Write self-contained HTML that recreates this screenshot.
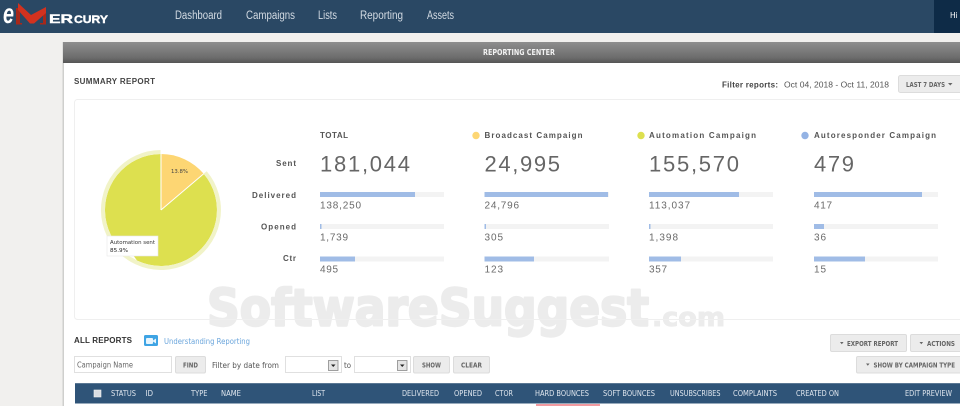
<!DOCTYPE html>
<html><head><meta charset="utf-8"><title>Reporting Center</title>
<style>
html,body{margin:0;padding:0;width:960px;height:406px;overflow:hidden;background:#f1f0ee}
svg{display:block}
text{font-family:"DejaVu Sans","Liberation Sans",sans-serif}
.l{font-family:"Liberation Sans",sans-serif}
.nav{font-family:"Liberation Sans",sans-serif;font-size:11.5px;fill:#d3dbe3}
.b{font-family:"Liberation Sans",sans-serif;font-weight:700;font-size:8px;fill:#555}
.big{font-family:"Liberation Sans",sans-serif;font-size:22px;fill:#666}
.n{font-family:"Liberation Sans",sans-serif;font-size:10px;fill:#6a6a6a}
.th{font-size:7.5px;fill:#dfe6ee}
.btn{font-size:7px;font-weight:700;fill:#666}
.t{fill:#f3f3f3}
.f{fill:#a0bce6}
.bt{fill:#ececec;stroke:#dcdcdc;stroke-width:1}
</style></head><body>
<svg width="960" height="406" viewBox="0 0 960 406" xmlns="http://www.w3.org/2000/svg">
<defs>
<linearGradient id="g" x1="0" y1="0" x2="0" y2="1"><stop offset="0" stop-color="#8e8e8e"/><stop offset=".75" stop-color="#6c6c6c"/><stop offset="1" stop-color="#555"/></linearGradient>
</defs>
<rect width="960" height="406" fill="#f1f0ee"/>
<!-- nav -->
<rect width="960" height="33" fill="#2a4864"/>
<rect x="934" width="26" height="33" fill="#0e2b47"/>
<text class="l" x="3" y="23" font-size="28" font-weight="700" font-style="italic" fill="#fff" textLength="11" lengthAdjust="spacingAndGlyphs">e</text>
<path d="M16 8h4v15h2v1.500h-6zM43 9l3-1v16.500h-6V23h3z" fill="#a8281a"/>
<path d="M18 3L31 15L46 7V13L34 23.500H30L18 10Z" fill="#d2321f"/>
<text class="l" x="49" y="23" font-size="12" font-weight="700" fill="#fff" stroke="#fff" stroke-width=".4" textLength="24" lengthAdjust="spacingAndGlyphs">ER</text>
<text class="l" x="74" y="23" font-size="11" font-weight="700" fill="#fff" stroke="#fff" stroke-width=".4" textLength="34" lengthAdjust="spacingAndGlyphs">CURY</text>
<text class="nav" x="175" y="19" textLength="47" lengthAdjust="spacingAndGlyphs">Dashboard</text>
<text class="nav" x="246" y="19" textLength="49" lengthAdjust="spacingAndGlyphs">Campaigns</text>
<text class="nav" x="318" y="19" textLength="19" lengthAdjust="spacingAndGlyphs">Lists</text>
<text class="nav" x="360" y="19" textLength="43" lengthAdjust="spacingAndGlyphs">Reporting</text>
<text class="nav" x="427" y="19" textLength="27" lengthAdjust="spacingAndGlyphs">Assets</text>
<text x="950" y="18" font-size="7.5" fill="#fff">Hi</text>
<!-- panel -->
<rect x="63" y="42" width="897" height="364" fill="#fff"/>
<rect x="62.5" y="42" width="1.5" height="364" fill="#cfcfcd"/>
<rect x="63" y="42" width="897" height="21" fill="url(#g)"/>
<text x="483" y="55" font-size="7.5" font-weight="700" fill="#f2f2f2" textLength="72" lengthAdjust="spacingAndGlyphs">REPORTING CENTER</text>
<text class="b" x="74" y="84" textLength="81" lengthAdjust="spacing" style="fill:#444">SUMMARY REPORT</text>
<text class="b" x="722" y="87.500" textLength="56" lengthAdjust="spacing" style="fill:#444">Filter reports:</text>
<text class="l" x="784" y="87.500" font-size="8.500" fill="#555" textLength="105" lengthAdjust="spacing">Oct 04, 2018 - Oct 11, 2018</text>
<rect class="bt" x="898.500" y="75.500" width="70" height="17" rx="2"/>
<text class="btn" x="906" y="87" textLength="39" lengthAdjust="spacingAndGlyphs">LAST 7 DAYS</text>
<path d="M948 83h4.500l-2.250 2.500z" fill="#666"/>
<!-- watermark -->
<text x="207" y="325.500" font-size="51" font-weight="700" fill="#ececec" stroke="#ececec" stroke-width="2.400" stroke-linejoin="round" textLength="442" lengthAdjust="spacingAndGlyphs">SoftwareSuggest</text>
<text x="652" y="326" font-size="26" font-weight="700" fill="#ececec" stroke="#ececec" stroke-width="1" textLength="73" lengthAdjust="spacingAndGlyphs">.com</text>
<!-- summary box -->
<rect x="74.500" y="99.500" width="900" height="220" rx="3" fill="none" stroke="#efefef"/>
<!-- pie -->
<path d="M161 210L203.700 173.800A56 56 0 1 1 161 154Z" fill="#dde04f"/>
<path d="M161 152A58 58 0 1 0 205.200 172.500" fill="none" stroke="#f1f3c8" stroke-width="4"/>
<path d="M161 210V154A56 56 0 0 1 203.700 173.800Z" fill="#fdd673"/>
<path d="M161 210L203.700 173.800M161 150V210" stroke="#fff" stroke-width="1" fill="none"/>
<text x="171" y="173" font-size="5.500" fill="#444" textLength="17" lengthAdjust="spacingAndGlyphs">13.8%</text>
<path d="M127 255L137 260.500L133 255Z" fill="#fff"/>
<rect x="107" y="236" width="51" height="20" fill="#fff" stroke="#e8e8e8" stroke-width=".6"/>
<text x="110" y="244" font-size="5.500" fill="#333" textLength="45" lengthAdjust="spacingAndGlyphs">Automation sent</text>
<text x="110" y="252" font-size="5.500" fill="#222" textLength="18" lengthAdjust="spacingAndGlyphs">85.9%</text>
<!-- row labels -->
<text class="b" x="276" y="166" textLength="20" lengthAdjust="spacing">Sent</text>
<text class="b" x="252" y="198" textLength="44" lengthAdjust="spacing">Delivered</text>
<text class="b" x="261" y="229.500" textLength="35" lengthAdjust="spacing">Opened</text>
<text class="b" x="283" y="261" textLength="13" lengthAdjust="spacing">Ctr</text>
<!-- columns -->
<text class="b" x="320" y="138" textLength="28" lengthAdjust="spacing">TOTAL</text>
<circle cx="476" cy="135.500" r="3.700" fill="#fdd673"/>
<text class="b" x="484.500" y="138" textLength="98" lengthAdjust="spacing">Broadcast Campaign</text>
<circle cx="641" cy="135.500" r="3.700" fill="#dde04f"/>
<text class="b" x="649" y="138" textLength="107" lengthAdjust="spacing">Automation Campaign</text>
<circle cx="805" cy="135.500" r="3.700" fill="#94b3e4"/>
<text class="b" x="814" y="138" textLength="122" lengthAdjust="spacing">Autoresponder Campaign</text>

<text class="big" x="320" y="171.700" textLength="90" lengthAdjust="spacing">181,044</text>
<text class="big" x="484.500" y="171.700" textLength="75.500" lengthAdjust="spacing">24,995</text>
<text class="big" x="649" y="171.700" textLength="90" lengthAdjust="spacing">155,570</text>
<text class="big" x="814" y="171.700" textLength="40" lengthAdjust="spacing">479</text>

<!-- bars -->
<rect class="t" x="320" y="192" width="124" height="5"/><rect class="f" x="320" y="192" width="95" height="5"/>
<rect class="t" x="320" y="224" width="124" height="5"/><rect class="f" x="320" y="224" width="1.500" height="5"/>
<rect class="t" x="320" y="256.500" width="124" height="5"/><rect class="f" x="320" y="256.500" width="35" height="5"/>
<rect class="t" x="484.500" y="192" width="124.500" height="5"/><rect class="f" x="484.500" y="192" width="123.500" height="5"/>
<rect class="t" x="484.500" y="224" width="124.500" height="5"/><rect class="f" x="484.500" y="224" width="1.500" height="5"/>
<rect class="t" x="484.500" y="256.500" width="124.500" height="5"/><rect class="f" x="484.500" y="256.500" width="49.500" height="5"/>
<rect class="t" x="649" y="192" width="124" height="5"/><rect class="f" x="649" y="192" width="90" height="5"/>
<rect class="t" x="649" y="224" width="124" height="5"/><rect class="f" x="649" y="224" width="1.500" height="5"/>
<rect class="t" x="649" y="256.500" width="124" height="5"/><rect class="f" x="649" y="256.500" width="32" height="5"/>
<rect class="t" x="814" y="192" width="124" height="5"/><rect class="f" x="814" y="192" width="108" height="5"/>
<rect class="t" x="814" y="224" width="124" height="5"/><rect class="f" x="814" y="224" width="10" height="5"/>
<rect class="t" x="814" y="256.500" width="124" height="5"/><rect class="f" x="814" y="256.500" width="51" height="5"/>

<text class="n" x="320" y="208.500" textLength="41" lengthAdjust="spacing">138,250</text>
<text class="n" x="320" y="240.700" textLength="28" lengthAdjust="spacing">1,739</text>
<text class="n" x="320" y="272.700" textLength="18" lengthAdjust="spacing">495</text>
<text class="n" x="484.500" y="208.500" textLength="34.500" lengthAdjust="spacing">24,796</text>
<text class="n" x="484.500" y="240.700" textLength="18.500" lengthAdjust="spacing">305</text>
<text class="n" x="484.500" y="272.700" textLength="18.500" lengthAdjust="spacing">123</text>
<text class="n" x="649" y="208.500" textLength="41" lengthAdjust="spacing">113,037</text>
<text class="n" x="649" y="240.700" textLength="29" lengthAdjust="spacing">1,398</text>
<text class="n" x="649" y="272.700" textLength="18" lengthAdjust="spacing">357</text>
<text class="n" x="814" y="208.500" textLength="18" lengthAdjust="spacing">417</text>
<text class="n" x="814" y="240.700" textLength="12" lengthAdjust="spacing">36</text>
<text class="n" x="814" y="272.700" textLength="12" lengthAdjust="spacing">15</text>

<!-- all reports -->
<text class="b" x="74" y="343" textLength="58" lengthAdjust="spacing" style="fill:#333">ALL REPORTS</text>
<rect x="144" y="335" width="14" height="11" rx="1.500" fill="#3fa4e4"/>
<rect x="146" y="338" width="7" height="6" rx="1" fill="#e8f5fd"/>
<path d="M153 340.500l3-2v5l-3-2z" fill="#e8f5fd"/>
<text x="164" y="344" font-size="8" fill="#6aa5dc" textLength="86" lengthAdjust="spacingAndGlyphs">Understanding Reporting</text>

<rect x="74.500" y="356.500" width="97" height="16" fill="#fff" stroke="#e0e0e0"/>
<text x="77" y="367.500" font-size="8" fill="#666" textLength="56" lengthAdjust="spacingAndGlyphs">Campaign Name</text>
<rect class="bt" x="175.500" y="356.500" width="30" height="16.500" rx="1.500"/>
<text class="btn" x="183" y="367.500" textLength="15" lengthAdjust="spacingAndGlyphs">FIND</text>
<text x="212" y="368" font-size="8" fill="#555" textLength="67" lengthAdjust="spacingAndGlyphs">Filter by date from</text>
<rect x="285.500" y="356.500" width="56" height="16" fill="#fff" stroke="#e0e0e0"/>
<rect x="328.500" y="360.500" width="9.500" height="10" fill="#e4e4e4" stroke="#8a8a8a" stroke-width=".8"/>
<path d="M331 364.500h4.500l-2.250 2.500z" fill="#222"/>
<text x="344" y="368" font-size="8" fill="#555" textLength="7" lengthAdjust="spacingAndGlyphs">to</text>
<rect x="354.500" y="356.500" width="56" height="16" fill="#fff" stroke="#e0e0e0"/>
<rect x="397.500" y="360.500" width="9.500" height="10" fill="#e4e4e4" stroke="#8a8a8a" stroke-width=".8"/>
<path d="M400 364.500h4.500l-2.250 2.500z" fill="#222"/>
<rect class="bt" x="413.500" y="356.500" width="36" height="16.500" rx="1.500"/>
<text class="btn" x="422" y="367.500" textLength="19" lengthAdjust="spacingAndGlyphs">SHOW</text>
<rect class="bt" x="453.500" y="356.500" width="36" height="16.500" rx="1.500"/>
<text class="btn" x="461" y="367.500" textLength="21" lengthAdjust="spacingAndGlyphs">CLEAR</text>

<rect class="bt" x="830.500" y="334.500" width="76" height="17" rx="1.500"/>
<path d="M840 342h3.600l-1.800 2.200z" fill="#666"/>
<text class="btn" x="847" y="346" textLength="51" lengthAdjust="spacingAndGlyphs">EXPORT REPORT</text>
<rect class="bt" x="910.500" y="334.500" width="60" height="17" rx="1.500"/>
<path d="M919.500 342h3.600l-1.800 2.200z" fill="#666"/>
<text class="btn" x="927" y="346" textLength="28" lengthAdjust="spacingAndGlyphs">ACTIONS</text>
<rect class="bt" x="856.500" y="356.500" width="114" height="16.500" rx="1.500"/>
<path d="M866 363.500h3.600l-1.800 2.200z" fill="#666"/>
<text class="btn" x="873.500" y="367.500" textLength="81.500" lengthAdjust="spacingAndGlyphs">SHOW BY CAMPAIGN TYPE</text>

<!-- table header -->
<rect x="75" y="383.500" width="885" height="20" fill="#2f5478"/>
<rect x="75" y="383" width="885" height="1" fill="#5b7894"/>
<rect x="94" y="390" width="7" height="7" fill="#d9dde2" stroke="#f2f2f2" stroke-width=".6"/>
<text class="th" x="111" y="396" textLength="25" lengthAdjust="spacingAndGlyphs">STATUS</text>
<text class="th" x="145.500" y="396" textLength="7.500" lengthAdjust="spacingAndGlyphs">ID</text>
<text class="th" x="191" y="396" textLength="16.500" lengthAdjust="spacingAndGlyphs">TYPE</text>
<text class="th" x="221" y="396" textLength="20" lengthAdjust="spacingAndGlyphs">NAME</text>
<text class="th" x="312" y="396" textLength="13" lengthAdjust="spacingAndGlyphs">LIST</text>
<text class="th" x="402" y="396" textLength="37" lengthAdjust="spacingAndGlyphs">DELIVERED</text>
<text class="th" x="454" y="396" textLength="28" lengthAdjust="spacingAndGlyphs">OPENED</text>
<text class="th" x="495" y="396" textLength="18" lengthAdjust="spacingAndGlyphs">CTOR</text>
<text class="th" x="535" y="396" textLength="54" lengthAdjust="spacingAndGlyphs">HARD BOUNCES</text>
<text class="th" x="603" y="396" textLength="52" lengthAdjust="spacingAndGlyphs">SOFT BOUNCES</text>
<text class="th" x="670" y="396" textLength="50.500" lengthAdjust="spacingAndGlyphs">UNSUBSCRIBES</text>
<text class="th" x="733" y="396" textLength="44" lengthAdjust="spacingAndGlyphs">COMPLAINTS</text>
<text class="th" x="796" y="396" textLength="43" lengthAdjust="spacingAndGlyphs">CREATED ON</text>
<text class="th" x="905" y="396" textLength="47" lengthAdjust="spacingAndGlyphs">EDIT PREVIEW</text>
<rect x="536" y="404" width="64" height="2" fill="#f29aa0"/>
</svg>
</body></html>
